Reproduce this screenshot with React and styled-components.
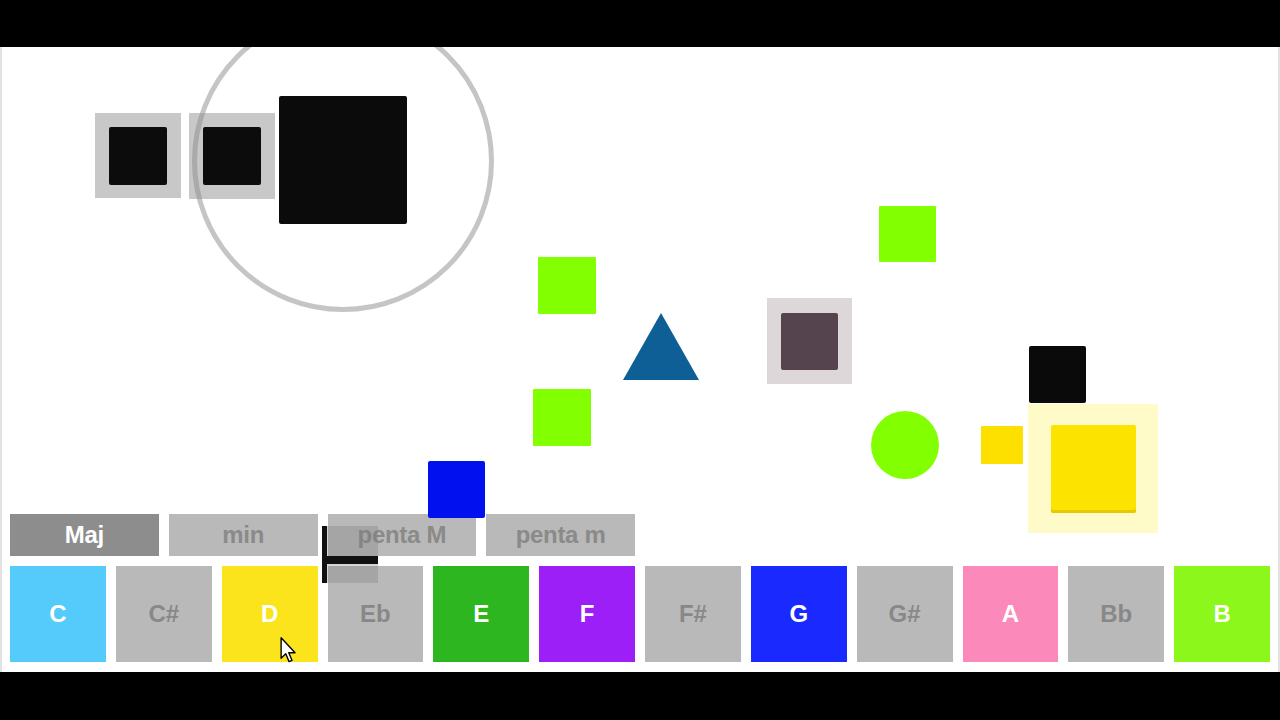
import React from "react";
import styled, { createGlobalStyle } from "styled-components";

const GlobalStyle = createGlobalStyle`
  html, body {
    margin: 0;
    padding: 0;
    background: #000;
  }
  body {
    font-family: "Liberation Sans", Arial, sans-serif;
  }
`;

const Screen = styled.div`
  width: 1280px;
  height: 720px;
  background: #000;
  display: flex;
  flex-direction: column;
  padding: 47px 0 48px;
  box-sizing: border-box;
`;

const Stage = styled.div`
  flex: 1;
  position: relative;
  overflow: hidden;
  background: #fff;
  box-shadow: inset 2px 0 0 #e2e2e2, inset -2px 0 0 #e2e2e2;
  display: flex;
  flex-direction: column;
  justify-content: flex-end;
`;

const Controls = styled.div`
  display: grid;
  grid-template-columns: repeat(24, 1fr);
  grid-template-rows: 42px 96px;
  column-gap: 10px;
  row-gap: 10px;
  padding: 0 10px 10px;
`;

const ModeButton = styled.div`
  grid-row: 1;
  grid-column: span 3;
  display: flex;
  align-items: center;
  justify-content: center;
  background: ${(p) => (p.$active ? "#8d8d8d" : "#b9b9b9")};
  color: ${(p) => (p.$active ? "#fff" : "#8a8a8a")};
  font-size: 24px;
  font-weight: 700;
  letter-spacing: -0.3px;
`;

const KeyButton = styled.div`
  grid-row: 2;
  grid-column: span 2;
  display: flex;
  align-items: center;
  justify-content: center;
  background: ${(p) => p.$color || "#b9b9b9"};
  color: ${(p) => (p.$color ? "#fff" : "#888")};
  font-size: 24px;
  font-weight: 700;
`;

const Layer = styled.div`
  position: absolute;
  inset: 0;
  pointer-events: none;
  z-index: 2;
`;

const Piece = styled.div`
  position: absolute;
  left: ${(p) => p.$x}px;
  top: ${(p) => p.$y - 47}px;
  width: ${(p) => p.$w}px;
  height: ${(p) => p.$h || p.$w}px;
`;

const Block = styled(Piece)`
  background: ${(p) => p.$bg};
  border-radius: ${(p) => p.$r || 1}px;
`;

const Frame = styled(Piece)`
  background: ${(p) => p.$bg};
  display: flex;
  align-items: center;
  justify-content: center;
`;

const Inner = styled.div`
  width: ${(p) => p.$w}px;
  height: ${(p) => p.$h || p.$w}px;
  background: ${(p) => p.$bg};
  border-radius: 2px;
  box-shadow: ${(p) => p.$shade || "none"};
`;

const Ring = styled(Piece)`
  box-sizing: border-box;
  border-radius: 50%;
  border: 5px solid rgba(139, 139, 139, 0.5);
`;

const Dot = styled(Piece)`
  border-radius: 50%;
  background: ${(p) => p.$bg};
`;

const Drag = styled(Piece)`
  background: rgba(120, 120, 120, 0.3);
  border-left: 5px solid #111;
  box-sizing: border-box;

  &::after {
    content: "";
    position: absolute;
    left: 0;
    right: 0;
    top: 30px;
    height: 8px;
    background: #111;
  }
`;

const Pointer = styled.svg`
  position: absolute;
  left: 280px;
  top: ${637 - 47}px;
`;

const modes = ["Maj", "min", "penta M", "penta m"];

const keys = [
  { name: "C", color: "#54cbfa" },
  { name: "C#" },
  { name: "D", color: "#fce41d" },
  { name: "Eb" },
  { name: "E", color: "#2db61f" },
  { name: "F", color: "#9b1ff6" },
  { name: "F#" },
  { name: "G", color: "#1a2aff" },
  { name: "G#" },
  { name: "A", color: "#fb89ba" },
  { name: "Bb" },
  { name: "B", color: "#8cf71a" },
];

const LIME = "#82ff00";

const App = () => {
  return (
    <>
      <GlobalStyle />
      <Screen>
        <Stage>
          <Controls>
            {modes.map((m, i) => (
              <ModeButton key={m} $active={i === 0}>
                {m}
              </ModeButton>
            ))}
            {keys.map((k) => (
              <KeyButton key={k.name} $color={k.color}>
                {k.name}
              </KeyButton>
            ))}
          </Controls>

          <Layer>
            <Frame $x={95} $y={113} $w={86} $h={85} $bg="#c8c8c8">
              <Inner $w={58} $bg="#0c0c0c" />
            </Frame>
            <Frame $x={189} $y={113} $w={86} $h={86} $bg="#c8c8c8">
              <Inner $w={58} $bg="#0c0c0c" />
            </Frame>
            <Block $x={279} $y={96} $w={128} $bg="#0b0b0b" $r={2} />
            <Ring $x={192} $y={10} $w={302} />

            <Block $x={538} $y={257} $w={58} $h={57} $bg={LIME} />
            <Block $x={533} $y={389} $w={58} $h={57} $bg={LIME} />
            <Block $x={879} $y={206} $w={57} $h={56} $bg={LIME} />
            <Dot $x={871} $y={411} $w={68} $bg={LIME} />

            <Piece $x={623} $y={313} $w={76} $h={67}>
              <svg width="76" height="67" viewBox="0 0 76 67">
                <polygon points="38,0 76,67 0,67" fill="#0d5f95" />
              </svg>
            </Piece>

            <Frame $x={767} $y={298} $w={85} $h={86} $bg="#ddd7d9">
              <Inner $w={57} $bg="#55434d" />
            </Frame>

            <Block $x={1029} $y={346} $w={57} $bg="#0a0a0a" $r={2} />
            <Frame $x={1028} $y={404} $w={130} $h={129} $bg="#fefbc9">
              <Inner $w={85} $h={88} $bg="#fde300" $shade="inset 0 -3px 0 #e6c900" />
            </Frame>
            <Block $x={981} $y={426} $w={42} $h={38} $bg="#fde000" />

            <Block $x={428} $y={461} $w={57} $bg="#0010ef" $r={2} />

            <Drag $x={322} $y={526} $w={56} $h={57} />

            <Pointer width="17" height="26" viewBox="0 0 12 19">
              <path
                d="M0.6 0.6 L0.6 15.5 L4 12.3 L6.4 18 L8.6 17.1 L6.2 11.5 L10.8 11.5 Z"
                fill="#fff"
                stroke="#000"
                strokeWidth="1"
                strokeLinejoin="round"
              />
            </Pointer>
          </Layer>
        </Stage>
      </Screen>
    </>
  );
};

export default App;
